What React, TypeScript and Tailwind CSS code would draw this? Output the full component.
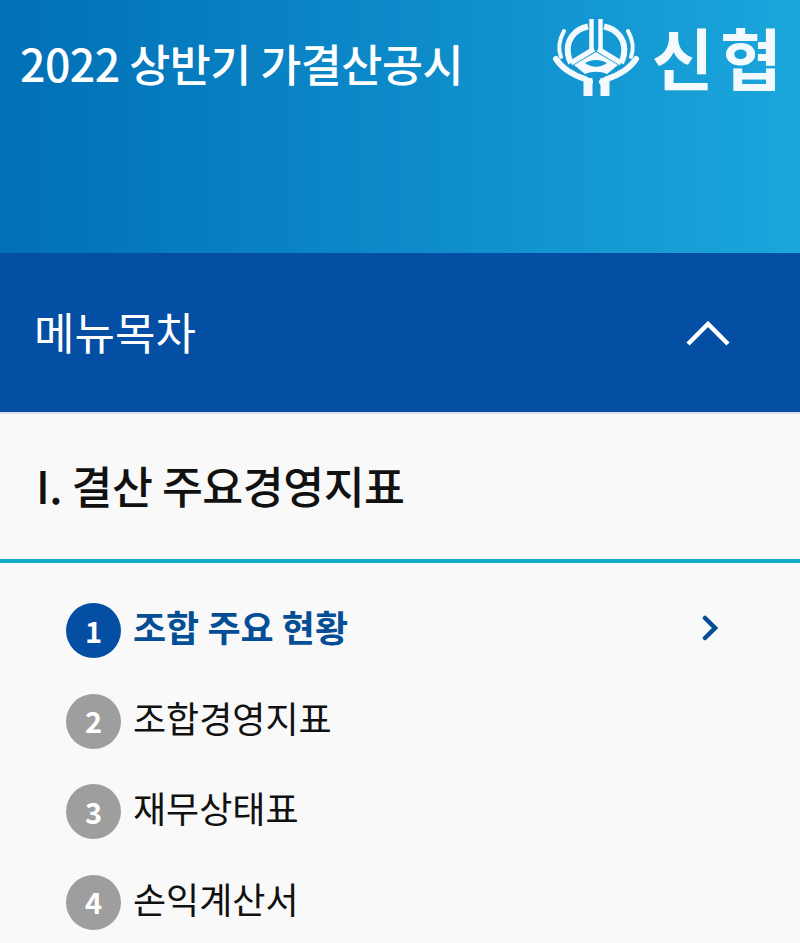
const font = "[font-family:'Noto_Sans_CJK_KR','Noto_Sans',sans-serif]"

const items = [
  { num: 1, label: '조합 주요 현황', active: true },
  { num: 2, label: '조합경영지표' },
  { num: 3, label: '재무상태표' },
  { num: 4, label: '손익계산서' },
]

function Emblem() {
  return (
    <svg viewBox="0 0 92 88" className="h-[88px] w-[92px] shrink-0" fill="none" stroke="white">
      {/* ring and the two centre posts */}
      <path d="M38 14.5C24 17 16 29 18 42c.4 3 1.4 6 3 9M54 14.5C68 17 76 29 74 42c-.4 3-1.4 6-3 9" strokeWidth="6" />
      <path d="M41.5 7v31M50.5 7v31" strokeWidth="4.5" />
      {/* spokes and eye */}
      <path d="M44 37 21 51M48 37l23 14" strokeWidth="5" />
      <path d="M46 40 24 53l11 9c7-3 15-3 22 0l11-9z" fill="white" stroke="none" />
      <path d="M35 51c7-4 15-4 22 0-7 5-15 5-22 0z" fill="#119ad4" stroke="none" />
      {/* leaves */}
      <path d="M14 19c-5 9-6 18-3 26M78 19c5 9 6 18 3 26" strokeWidth="4" strokeLinecap="round" />
      {/* hands */}
      <path d="M6 47c7 11 17 16 29 20l5 3M86 47c-7 11-17 16-29 20l-5 3" strokeWidth="6" strokeLinecap="round" />
      <path d="M38 66v18M55 66v18" strokeWidth="9" />
    </svg>
  )
}

export default function App() {
  return (
    <div className={`h-[943px] w-[800px] overflow-hidden bg-[#f9f9f9] ${font}`}>
      <header className="flex h-[253px] items-start justify-between bg-gradient-to-r from-[#026fb6] to-[#1ba6dc] pl-[20px] pr-[11px] pt-[12px]">
        <h1 className="mt-[26px] text-[44.6px] leading-[50px] font-medium tracking-[-0.5px] text-white">
          2022 상반기 가결산공시
        </h1>
        <div className="flex items-start gap-[10px] opacity-95">
          <Emblem />
          <span className="mt-[6px] text-[67px] leading-[76px] font-bold tracking-[7px] text-white">신협</span>
        </div>
      </header>

      <div className="flex h-[161px] items-center justify-between border-b-2 border-[#dbe3ee] bg-[#044ea3] pl-[34px] pr-[70px]">
        <span className="-mt-[4px] text-[44px] leading-[50px] font-normal text-white">메뉴목차</span>
        <svg viewBox="0 0 44 26" className="h-[26px] w-[44px]" fill="none" stroke="white" strokeWidth="4.5">
          <path d="M2 24 22 4l20 20" />
        </svg>
      </div>

      <div className="flex h-[145px] items-center pl-[36px]">
        <h2 className="-mt-[3px] text-[44.5px] leading-[50px] font-medium tracking-[-0.5px] text-[#111]">I. 결산 주요경영지표</h2>
      </div>
      <div className="h-[4px] bg-[#14a9cb]" />

      <ul className="flex flex-col gap-[35.5px] pl-[66px] pr-[82px] pt-[40px]">
        {items.map((item) => (
          <li key={item.num} className="flex h-[55px] items-center gap-[12px]">
            <span
              className={`flex h-[55px] w-[55px] shrink-0 items-center justify-center rounded-full text-[29px] font-bold text-white ${
                item.active ? 'bg-[#044ea3]' : 'bg-[#9e9e9e]'
              }`}
            >
              {item.num}
            </span>
            <span
              className={`-mt-[9px] flex-1 text-[36px] leading-[44px] ${
                item.active ? 'font-bold text-[#044e96]' : 'font-normal text-[#111]'
              }`}
            >
              {item.label}
            </span>
            {item.active && (
              <svg viewBox="0 0 16 26" className="-mt-[5px] h-[26px] w-[16px]" fill="none" stroke="#044e96" strokeWidth="4.5" strokeLinecap="round">
                <path d="M3 3l10 10L3 23" />
              </svg>
            )}
          </li>
        ))}
      </ul>
    </div>
  )
}
